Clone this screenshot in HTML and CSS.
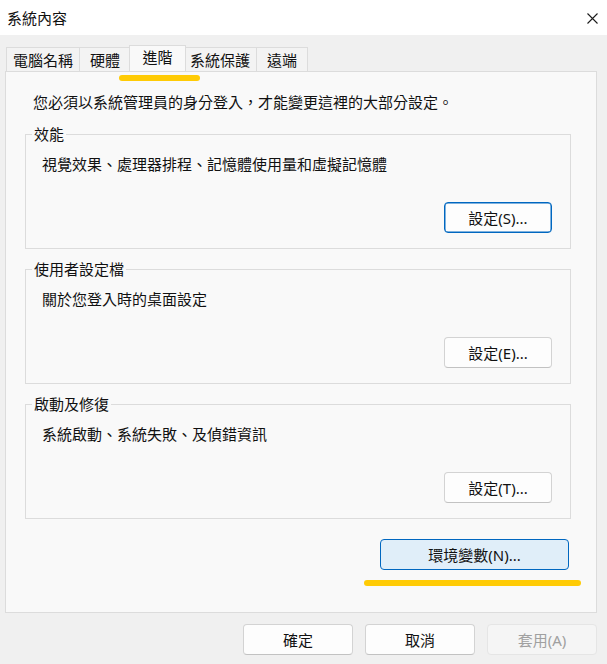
FILE: index.html
```html
<!DOCTYPE html>
<html lang="zh-Hant">

<head>
    <meta charset="UTF-8">
    <meta name="viewport" content="width=device-width, initial-scale=1.0">
    <title>系統內容</title>
    <link rel="stylesheet" href="styles.css">
</head>

<body>
    <div class="dialog">
        <header class="titlebar">
            <span class="titlebar__title">系統內容</span>
            <button class="titlebar__close" aria-label="關閉">
                <svg width="11" height="11" viewBox="0 0 11 11">
                    <path d="M0.5 0.5 L10.5 10.5 M10.5 0.5 L0.5 10.5" stroke="#1b1b1b" stroke-width="1.1" fill="none" />
                </svg>
            </button>
        </header>

        <div class="dialog__body">
            <nav class="tabs">
                <span class="tabs__item">電腦名稱</span>
                <span class="tabs__item">硬體</span>
                <span class="tabs__item tabs__item--active">進階</span>
                <span class="tabs__item">系統保護</span>
                <span class="tabs__item">遠端</span>
            </nav>

            <section class="panel">
                <p class="panel__intro">您必須以系統管理員的身分登入，才能變更這裡的大部分設定。</p>

                <fieldset class="group">
                    <legend class="group__title">效能</legend>
                    <div class="group__body">
                        <p class="group__text">視覺效果、處理器排程、記憶體使用量和虛擬記憶體</p>
                        <div class="group__actions">
                            <button class="btn btn--focus">設定(S)...</button>
                        </div>
                    </div>
                </fieldset>

                <fieldset class="group">
                    <legend class="group__title">使用者設定檔</legend>
                    <div class="group__body">
                        <p class="group__text">關於您登入時的桌面設定</p>
                        <div class="group__actions">
                            <button class="btn">設定(E)...</button>
                        </div>
                    </div>
                </fieldset>

                <fieldset class="group">
                    <legend class="group__title">啟動及修復</legend>
                    <div class="group__body">
                        <p class="group__text">系統啟動、系統失敗、及偵錯資訊</p>
                        <div class="group__actions">
                            <button class="btn">設定(T)...</button>
                        </div>
                    </div>
                </fieldset>

                <div class="panel__footer">
                    <button class="btn btn--wide btn--selected">環境變數(N)...</button>
                </div>
            </section>

            <div class="actions">
                <button class="btn btn--action">確定</button>
                <button class="btn btn--action">取消</button>
                <button class="btn btn--action" disabled>套用(A)</button>
            </div>
        </div>

        <!-- annotation marks -->
        <span class="mark mark--tab"></span>
        <span class="mark mark--env"></span>
    </div>
</body>

</html>
```

FILE: styles.css
```css
:root {
    --bg: #f0f0f0;
    --panel-bg: #f9f9f9;
    --line: #dcdcdc;
    --accent: #0067c0;
    --mark: #ffcb05;
}

* {
    box-sizing: border-box;
}

body {
    margin: 0;
    padding: 0;
    background-color: var(--bg);
    color: #111111;
    font-family: 'Noto Sans', 'Noto Sans CJK TC', sans-serif;
    font-size: 15px;
    line-height: 20px;
}

p {
    margin: 0;
}

.dialog {
    position: relative;
    width: 607px;
    height: 664px;
    overflow: hidden;
}

.titlebar {
    display: flex;
    align-items: center;
    justify-content: space-between;
    height: 35px;
    padding: 0 9px 0 7px;
    background-color: #ffffff;
}

.titlebar__title {
    padding-top: 1px;
}

.titlebar__close {
    display: flex;
    padding: 0;
    border: 0;
    background: none;
    margin-top: 1px;
}

.dialog__body {
    padding: 10px 10px 0 5px;
}

.tabs {
    display: flex;
    align-items: flex-end;
    height: 26px;
    padding-left: 1px;
}

.tabs__item {
    position: relative;
    min-width: 52px;
    height: 24px;
    padding: 2px 6px 0;
    line-height: 21px;
    text-align: center;
    background-color: #f3f3f3;
    border: 1px solid var(--line);
    border-bottom: 0;
    margin-left: -1px;
}

.tabs__item:first-child {
    margin-left: 0;
}

.tabs__item--active {
    z-index: 1;
    height: 26px;
    min-width: 57px;
    padding-top: 1px;
    margin: 0 -2px 0 -2px;
    background-color: var(--panel-bg);
}

.panel {
    display: flex;
    flex-direction: column;
    height: 542px;
    padding: 20px 25px 0 19px;
    background-color: var(--panel-bg);
    border: 1px solid var(--line);
}

.panel__intro {
    padding-left: 8px;
    margin-bottom: 12px;
}

.group {
    margin: 0 0 10px;
    padding: 0;
    border: 1px solid var(--line);
    min-width: 0;
}

.group__title {
    margin-left: 6px;
    padding: 0 2px;
}

.group__body {
    padding: 10px 18px 15px 16px;
}

.group__actions {
    display: flex;
    justify-content: flex-end;
    margin-top: 28px;
}

.panel__footer {
    display: flex;
    justify-content: flex-end;
    margin-top: 10px;
    padding-right: 2px;
}

.btn {
    width: 108px;
    height: 31px;
    padding: 0;
    font-family: inherit;
    font-size: 15px;
    color: #111111;
    background-color: #fdfdfd;
    border: 1px solid #d3d3d3;
    border-bottom-color: #c2c2c2;
    border-radius: 4px;
}

.btn--focus {
    border: 1px solid var(--accent);
    box-shadow: inset 0 0 0 0.5px var(--accent);
}

.btn--wide {
    width: 189px;
}

.btn--selected {
    background-color: #e0eef9;
    border: 1px solid var(--accent);
}

.actions {
    display: flex;
    justify-content: flex-end;
    gap: 12px;
    margin-top: 11px;
}

.btn--action {
    width: 110px;
    height: 31px;
}

.btn:disabled {
    color: #a0a0a0;
    background-color: #f5f5f5;
    border-color: #e5e5e5;
}

.mark {
    position: absolute;
    height: 6px;
    border-radius: 3px;
    background-color: var(--mark);
}

.mark--tab {
    left: 119px;
    top: 75px;
    width: 81px;
}

.mark--env {
    left: 364px;
    top: 580px;
    width: 217px;
}
```
